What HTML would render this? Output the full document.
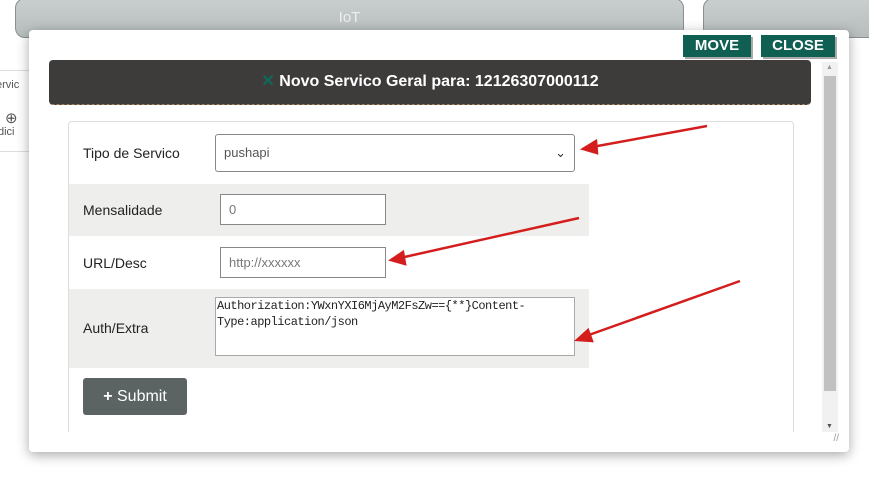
<!DOCTYPE html>
<html><head><style>
body{margin:0;width:869px;height:484px;overflow:hidden;background:#fff;font-family:"Liberation Sans",sans-serif;position:relative}
.tab{position:absolute;top:-2px;height:38px;border:1px solid #8a9090;border-radius:10px;background:linear-gradient(#c9cfcf,#b7bdbd);color:#eee;text-align:center;line-height:38px;font-size:15px}
.modal{position:absolute;left:29px;top:30px;width:820px;height:422px;background:#fff;border-radius:4px;box-shadow:0 3px 12px rgba(0,0,0,.35);overflow:hidden}
.btn{position:absolute;top:5px;height:22px;background:#0f5f52;color:#fff;font-weight:bold;font-size:15px;line-height:22px;text-align:center;box-shadow:2px 2px 0 #aaa;font-family:"Liberation Sans Narrow","Liberation Sans",sans-serif}
.hdr{position:absolute;left:20px;top:30px;width:762px;height:44px;background:#3d3c3b;border-radius:4px;color:#fff;font-weight:bold;font-size:16px;text-align:center;line-height:44px;border-bottom:1px dashed #a08060}
.card{position:absolute;left:39px;top:91px;width:724px;height:330px;border:1px solid #ddd;border-radius:4px;background:#fff;overflow:hidden}
.row{position:absolute;left:0;width:520px;font-size:14px;color:#222}
.row span{position:absolute;left:14px}
.inp{position:absolute;border:1px solid #888;background:#fff;font-size:13px;color:#777;box-sizing:border-box;padding-left:8px}
</style></head><body>
<div style="position:absolute;left:0;top:70px;width:30px;height:80px;border-top:1px solid #ddd;border-bottom:1px solid #ddd;font-size:11px;color:#555"><div style="position:absolute;top:8px;left:-4px">ervic</div><div style="position:absolute;top:38px;left:5px;font-size:15px">⊕</div><div style="position:absolute;top:55px;left:-2px">dici</div></div>
<div class="tab" style="left:15px;width:667px">IoT</div>
<div class="tab" style="left:703px;width:180px"></div>
<div class="modal">
<div style="position:absolute;left:0;top:402px;width:820px;height:20px;background:#fff;z-index:2"></div>
<div class="btn" style="left:654px;width:68px">MOVE</div>
<div class="btn" style="left:732px;width:74px">CLOSE</div>
<div class="hdr"><span style="color:#0f6a5a">✕</span> Novo Servico Geral para: 12126307000112</div>
<div style="position:absolute;left:793px;top:32px;width:16px;height:370px;background:#f1f1f1"><div style="position:absolute;left:2px;top:14px;width:12px;height:315px;background:#c1c1c1"></div><div style="position:absolute;top:2px;left:4px;font-size:7px;color:#999">▲</div><div style="position:absolute;bottom:2px;left:4px;font-size:7px;color:#555">▼</div></div>
<div style="position:absolute;right:10px;bottom:8px;font-size:10px;color:#999;z-index:3">//</div>
<div class="card">
<div class="row" style="top:0;height:62px"><span style="top:23px">Tipo de Servico</span>
<div class="inp" style="left:146px;top:12px;width:360px;height:38px;line-height:36px;border-radius:3px;color:#555">pushapi<span style="left:auto;right:8px;top:0;color:#333">⌄</span></div></div>
<div class="row" style="top:62px;height:52px;background:#eeeeec"><span style="top:18px">Mensalidade</span>
<div class="inp" style="left:151px;top:10px;width:166px;height:31px;line-height:29px">0</div></div>
<div class="row" style="top:114px;height:53px"><span style="top:19px">URL/Desc</span>
<div class="inp" style="left:151px;top:11px;width:166px;height:31px;line-height:29px">http://xxxxxx</div></div>
<div class="row" style="top:167px;height:79px;background:#eeeeec"><span style="top:31px">Auth/Extra</span>
<div class="inp" style="left:146px;top:8px;width:360px;height:59px;font-family:'Liberation Mono',monospace;font-size:12px;letter-spacing:-0.5px;color:#222;padding-left:1px;line-height:16px;border-color:#aaa">Authorization:YWxnYXI6MjAyM2FsZw=={**}Content-<br>Type:application/json</div></div>
<div style="position:absolute;left:14px;top:256px;width:104px;height:37px;background:#5b6463;border-radius:3px;color:#fff;font-size:16px;line-height:37px;text-align:center"><b>+</b> Submit</div>
</div>
</div>
<svg style="position:absolute;left:0;top:0" width="869" height="484"><g stroke="#d41e1e" stroke-width="2.5" fill="#d41e1e">
<line x1="707" y1="126" x2="592" y2="147"/><polygon points="583,149 596,141 597,153"/>
<line x1="579" y1="218" x2="400" y2="258"/><polygon points="391,260 403,252 405,264"/>
<line x1="740" y1="281" x2="586" y2="336"/><polygon points="577,340 588,330 592,341"/>
</g></svg>
</body></html>
